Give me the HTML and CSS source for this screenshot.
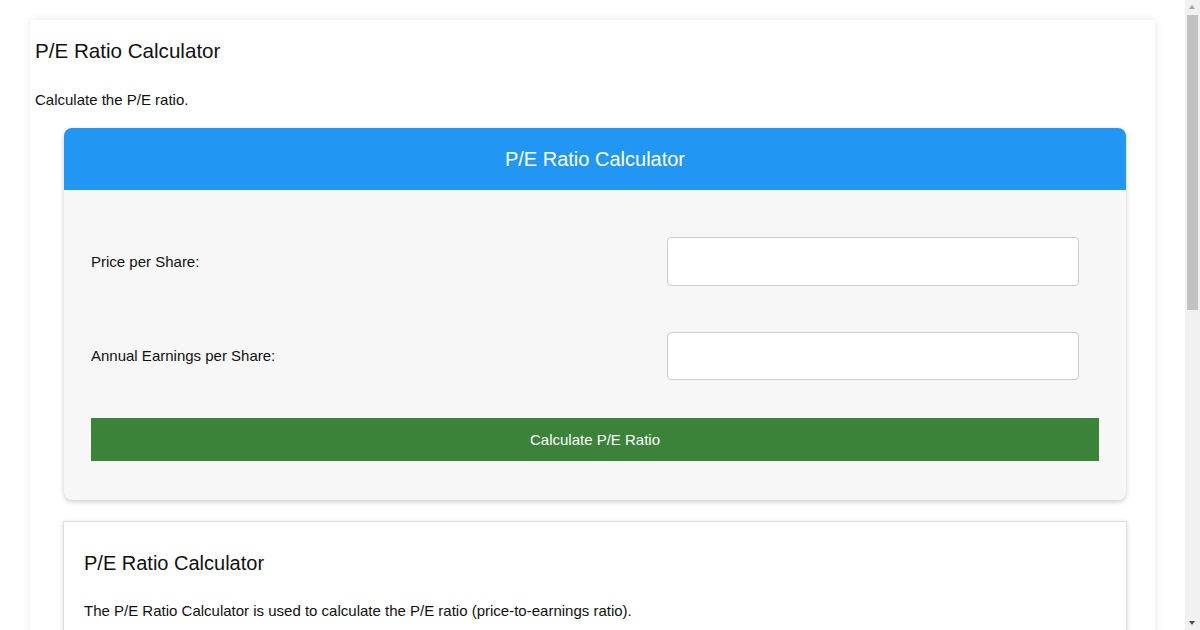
FILE: index.html
```html
<!DOCTYPE html>
<html lang="en">
<head>
<meta charset="utf-8">
<title>P/E Ratio Calculator</title>
<link rel="stylesheet" href="styles.css">
</head>
<body>
<div class="page">
  <h1 class="page-title">P/E Ratio Calculator</h1>
  <p class="page-intro">Calculate the P/E ratio.</p>

  <div class="calc">
    <div class="calc-head">P/E Ratio Calculator</div>
    <div class="calc-body">
      <div class="row">
        <label class="row-label" for="price">Price per Share:</label>
        <input class="row-input" id="price" type="text">
      </div>
      <div class="row">
        <label class="row-label" for="eps">Annual Earnings per Share:</label>
        <input class="row-input row-input-b" id="eps" type="text">
      </div>
      <button class="calc-btn" type="button">Calculate P/E Ratio</button>
    </div>
  </div>

  <div class="info">
    <h2 class="info-title">P/E Ratio Calculator</h2>
    <p class="info-text">The P/E Ratio Calculator is used to calculate the P/E ratio (price-to-earnings ratio).</p>
    <h3 class="info-sub">P/E Ratio Definition</h3>
    <p class="info-text">The P/E ratio, or price-to-earnings ratio, is a valuation ratio of a company's current share price compared to its per-share earnings.</p>
    <h3 class="info-sub">P/E Ratio Formula</h3>
    <p class="info-text">P/E Ratio = Price per Share / Annual Earnings per Share</p>
    <p class="info-text">A high P/E ratio could mean that a company's stock is over-valued, or else that investors are expecting high growth rates in the future.</p>
    <p class="info-text">A low P/E ratio could mean that a company's stock is under-valued, or that the company is not expected to grow much.</p>
  </div>
</div>

<div class="scrollbar" aria-hidden="true">
  <div class="sb-arrow sb-up"></div>
  <div class="sb-thumb"></div>
  <div class="sb-arrow sb-down"></div>
</div>
</body>
</html>
```

FILE: styles.css
```css
html, body {
  margin: 0;
  padding: 0;
  background: #ffffff;
}

body {
  font-family: "Liberation Sans", Arial, sans-serif;
  font-size: 15px;
  color: #111;
  padding: 20px 45px 40px 30px;
}

.page {
  background: #ffffff;
  padding: 1px 5px 30px;
  box-shadow: 0 0 8px rgba(0, 0, 0, 0.1);
}

.page-title {
  font-size: 20.6px;
  font-weight: normal;
  margin: 18px 0 0;
  line-height: 24px;
}

.page-intro {
  margin: 28px 0 0;
  line-height: 18px;
}

.calc {
  margin: 19px 24px 0 29px;
  border-radius: 8px;
  background: #f7f7f7;
  box-shadow: 0 2px 5px rgba(0, 0, 0, 0.2);
  overflow: hidden;
}

.calc-head {
  background: #2196f3;
  color: #ffffff;
  font-size: 20px;
  line-height: 24px;
  text-align: center;
  padding: 19px 0;
}

.calc-body {
  padding: 27px 27px 39px;
}

.row {
  display: flex;
  align-items: center;
  padding: 20px 0;
  margin-bottom: 6px;
}

.row-label {
  flex: 1;
  line-height: 18px;
}

.row-input {
  box-sizing: border-box;
  width: 412px;
  height: 49px;
  margin-right: 20px;
  border: 1px solid #cccccc;
  border-radius: 4px;
  background: #ffffff;
  font: inherit;
  padding: 0 10px;
}

.row-input-b {
  height: 48px;
}

.calc-btn {
  display: block;
  width: 100%;
  height: 43px;
  margin-top: 18px;
  border: none;
  background: #3a8339;
  color: #ffffff;
  font-family: "Liberation Sans", Arial, sans-serif;
  font-size: 15px;
  cursor: pointer;
}

.info {
  margin: 21px 23px 0 28px;
  background: #ffffff;
  border: 1px solid #dddddd;
  box-shadow: 0 1px 5px rgba(0, 0, 0, 0.15);
  padding: 20px 20px 30px;
}

.info-title {
  font-size: 20px;
  font-weight: normal;
  line-height: 24px;
  margin: 9px 0 0;
}

.info-text {
  margin: 27px 0 0;
  line-height: 18px;
}

.info-sub {
  font-size: 17px;
  font-weight: normal;
  margin: 30px 0 0;
}

/* imitation of the browser's classic scrollbar */
.scrollbar {
  position: fixed;
  top: 0;
  right: 0;
  width: 15px;
  height: 100vh;
  background: #f1f1f1;
}

.sb-thumb {
  position: absolute;
  top: 15px;
  left: 2px;
  width: 11px;
  height: 295px;
  background: #c1c1c1;
}

.sb-arrow {
  position: absolute;
  left: 4px;
  width: 0;
  height: 0;
  border-left: 3.5px solid transparent;
  border-right: 3.5px solid transparent;
}

.sb-up {
  top: 5px;
  border-bottom: 4px solid #a3a3a3;
}

.sb-down {
  bottom: 5px;
  border-top: 4px solid #505050;
}
```
